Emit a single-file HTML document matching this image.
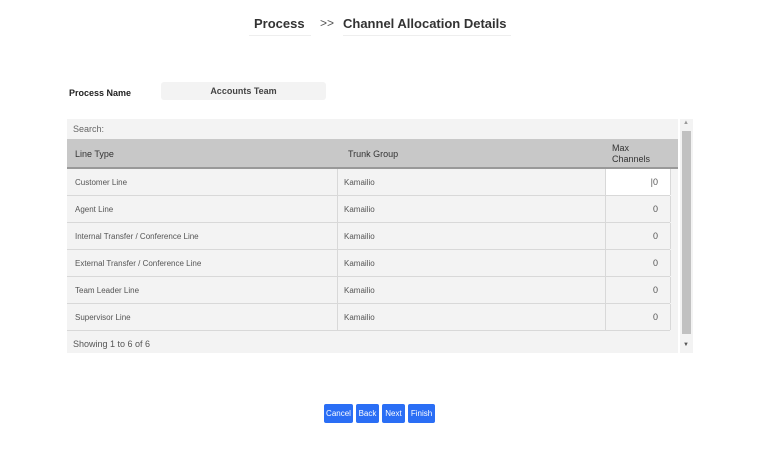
<!DOCTYPE html>
<html><head><style>
body{margin:0;width:768px;height:452px;background:#fff;font-family:"Liberation Sans",sans-serif;position:relative;overflow:hidden}
.a{position:absolute}
.t{font-size:13px;font-weight:bold;color:#333;top:16px}
.row{position:absolute;left:67px;width:603px;height:26px;background:#f3f3f3;border-bottom:1px solid #d8d8d8;font-size:8px;color:#555}
.row div{position:absolute;top:0;height:26px;line-height:27px}
.btn{position:absolute;top:404px;height:19px;background:#2a6ef5;color:#fff;font-size:8px;line-height:19px;text-align:center;border-radius:2px}
</style></head><body>
<div class="a t" style="left:254px">Process</div>
<div class="a" style="left:249px;top:35px;width:62px;height:1px;background:#eee"></div>
<div class="a t" style="left:320px;font-weight:normal;font-size:12px;top:16px;color:#555">&gt;&gt;</div>
<div class="a t" style="left:343px">Channel Allocation Details</div>
<div class="a" style="left:343px;top:35px;width:168px;height:1px;background:#eee"></div>
<div class="a" style="left:69px;top:88px;font-size:9px;font-weight:bold;color:#222">Process Name</div>
<div class="a" style="left:161px;top:82px;width:165px;height:18px;background:#f3f3f3;border-radius:3px;font-size:9px;font-weight:bold;color:#444;text-align:center;line-height:18px">Accounts Team</div>
<div class="a" style="left:67px;top:119px;width:611px;height:234px;background:#f3f3f3"></div>
<div class="a" style="left:73px;top:124px;font-size:9px;color:#666">Search:</div>
<div class="a" style="left:67px;top:139px;width:611px;height:28px;background:#c8c8c8;border-bottom:2px solid #999;font-size:9px;color:#333">
<div class="a" style="left:8px;top:10px">Line Type</div>
<div class="a" style="left:281px;top:10px">Trunk Group</div>
<div class="a" style="left:545px;top:4px;line-height:11px">Max<br>Channels</div>
</div>
<div class="row" style="top:169px"><div style="left:8px">Customer Line</div><div style="left:270px;border-left:1px solid #d8d8d8;padding-left:6px;width:262px">Kamailio</div><div style="left:538px;width:64px;border-left:1px solid #d8d8d8;border-right:1px solid #d8d8d8;background:#fff;text-align:right;font-size:9px"><span style="padding-right:12px">|0</span></div></div>
<div class="row" style="top:196px"><div style="left:8px">Agent Line</div><div style="left:270px;border-left:1px solid #d8d8d8;padding-left:6px;width:262px">Kamailio</div><div style="left:538px;width:64px;border-left:1px solid #d8d8d8;border-right:1px solid #d8d8d8;text-align:right;font-size:9px"><span style="padding-right:12px">0</span></div></div>
<div class="row" style="top:223px"><div style="left:8px">Internal Transfer / Conference Line</div><div style="left:270px;border-left:1px solid #d8d8d8;padding-left:6px;width:262px">Kamailio</div><div style="left:538px;width:64px;border-left:1px solid #d8d8d8;border-right:1px solid #d8d8d8;text-align:right;font-size:9px"><span style="padding-right:12px">0</span></div></div>
<div class="row" style="top:250px"><div style="left:8px">External Transfer / Conference Line</div><div style="left:270px;border-left:1px solid #d8d8d8;padding-left:6px;width:262px">Kamailio</div><div style="left:538px;width:64px;border-left:1px solid #d8d8d8;border-right:1px solid #d8d8d8;text-align:right;font-size:9px"><span style="padding-right:12px">0</span></div></div>
<div class="row" style="top:277px"><div style="left:8px">Team Leader Line</div><div style="left:270px;border-left:1px solid #d8d8d8;padding-left:6px;width:262px">Kamailio</div><div style="left:538px;width:64px;border-left:1px solid #d8d8d8;border-right:1px solid #d8d8d8;text-align:right;font-size:9px"><span style="padding-right:12px">0</span></div></div>
<div class="row" style="top:304px"><div style="left:8px">Supervisor Line</div><div style="left:270px;border-left:1px solid #d8d8d8;padding-left:6px;width:262px">Kamailio</div><div style="left:538px;width:64px;border-left:1px solid #d8d8d8;border-right:1px solid #d8d8d8;text-align:right;font-size:9px"><span style="padding-right:12px">0</span></div></div>
<div class="a" style="left:73px;top:339px;font-size:9px;color:#555">Showing 1 to 6 of 6</div>
<div class="a" style="left:680px;top:119px;width:13px;height:234px;background:#f3f3f3"></div>
<div class="a" style="left:682px;top:131px;width:9px;height:203px;background:#c1c1c1"></div>
<div class="a" style="left:683px;top:120px;font-size:6px;color:#999">▲</div>
<div class="a" style="left:683px;top:342px;font-size:6px;color:#555">▼</div>
<div class="btn" style="left:324px;width:29px">Cancel</div>
<div class="btn" style="left:356px;width:23px">Back</div>
<div class="btn" style="left:382px;width:23px">Next</div>
<div class="btn" style="left:408px;width:27px">Finish</div>
</body></html>
